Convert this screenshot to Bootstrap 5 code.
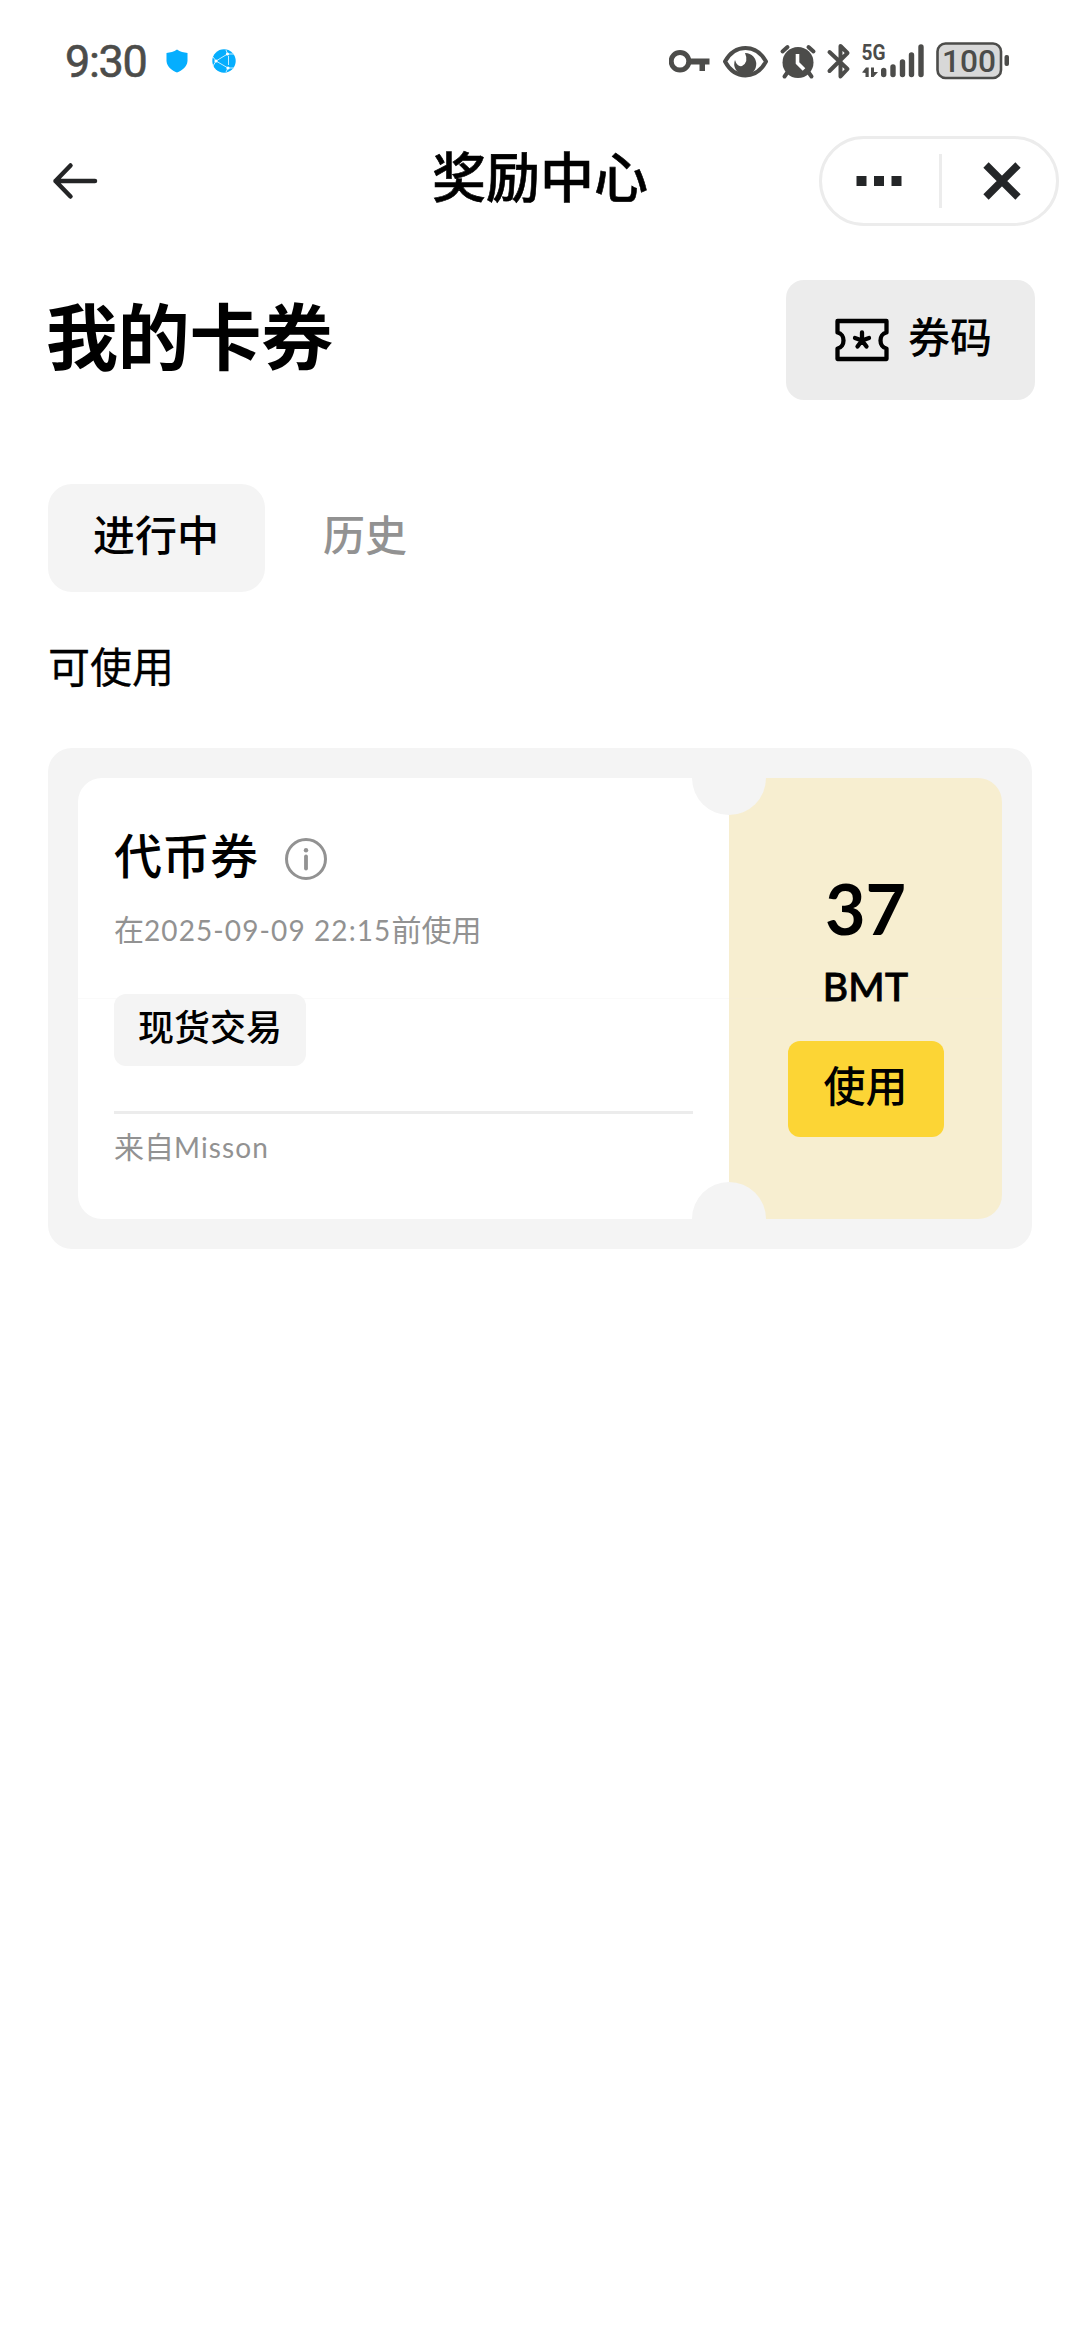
<!DOCTYPE html>
<html lang="zh-CN">
<head>
<meta charset="utf-8">
<meta name="viewport" content="width=device-width, initial-scale=1">
<title>奖励中心</title>
<link href="https://cdn.jsdelivr.net/npm/bootstrap@5.3.0/dist/css/bootstrap.min.css" rel="stylesheet">
<script src="https://cdn.jsdelivr.net/npm/bootstrap@5.3.0/dist/js/bootstrap.bundle.min.js"></script>
<style>
  body { background: #fff; color: #000; font-family: "Noto Sans CJK SC", sans-serif; min-height: 2340px; }
  svg { display: block; flex: none; }
  .medium { font-weight: 500; }
  .status-bar { height: 122px; padding-left: 65px; color: #4c4c4a; }
  .clock { font: 400 45px/50px Roboto, sans-serif; letter-spacing: -1.3px; width: 101px; padding-top: 2px; -webkit-text-stroke: .6px #4c4c4a; }
  .status-icons { padding-right: 70px; }
  .app-bar { height: 118px; padding: 0 21px; }
  .bar-side { flex: 1 1 0; }
  .back-icon { margin-left: 27px; }
  .bar-title { font-size: 54px; line-height: 60px; margin: 0; padding-bottom: 12px; -webkit-text-stroke: .6px #000; }
  .capsule { width: 240px; height: 90px; border: 3px solid #ececec; border-radius: 45px; }
  .capsule-line { width: 3px; height: 54px; background: #ececec; }
  .heading-row { padding: 40px 45px 0 46px; }
  .page-heading { font-size: 72px; line-height: 80px; margin: 0; padding-top: 13px; letter-spacing: -.3px; }
  .code-btn { width: 249px; height: 120px; border-radius: 18px; background: #ececec; border: 0; font-size: 42px; line-height: 48px; padding: 0 0 0 49px; gap: 19px; }
  .code-btn span { padding-bottom: 11px; }
  .tab-row { padding: 84px 48px 0; }
  .tab-pill { height: 108px; border-radius: 24px; font-size: 42px; line-height: 48px; padding: 25px 46px 0 45px; color: #000; background: #f4f4f4; }
  .tab-plain { background: none; color: #929292; padding: 25px 58px 0; }
  .group-label { font-size: 42px; line-height: 48px; margin: 0; padding: 49px 48px 0; -webkit-text-stroke: .3px #000; }
  .coupon-wrap { margin: 59px 48px 0; padding: 30px; border-radius: 24px; background: #f4f4f4; }
  .coupon { height: 441px; border-radius: 24px; overflow: hidden; }
  .coupon-main { width: 651px; padding: 48px 36px 0; background: linear-gradient(#fafafa, #fafafa) 0 220px/100% 1px no-repeat #fff; }
  .coupon-side { background: linear-gradient(#f6edd3, #f6edd3) 0 220px/100% 1px no-repeat #f7eed0; }
  .coupon-name { font-size: 48px; line-height: 54px; margin: 0; }
  .info-icon { margin: 12px 0 0 27px; }
  .notch { position: absolute; left: 614px; width: 74px; height: 74px; border-radius: 50%; background: #f4f4f4; }
  .notch-top { top: -37px; }
  .notch-bottom { bottom: -37px; }
  .note { color: #929292; font-size: 30px; line-height: 36px; height: 36px; }
  .date-note { margin-top: 30px; }
  .from-note { margin-top: 13px; }
  .latin { font-family: Lato, sans-serif; font-size: 28px; letter-spacing: 1.1px; }
  .type-tag { width: 192px; height: 72px; border-radius: 12px; background: #f4f4f4; font-size: 36px; line-height: 42px; padding-top: 10px; margin-top: 48px; }
  .rule { height: 3px; background: #ececec; margin-top: 45px; }
  .amount { font: 700 70px/76px Lato, sans-serif; padding-top: 92px; }
  .unit { font: 500 39px/46px Lato, sans-serif; margin-top: 17px; letter-spacing: .3px; -webkit-text-stroke: .8px #000; }
  .use-btn { width: 156px; height: 96px; border-radius: 12px; background: #fcd535; border: 0; font-size: 42px; line-height: 48px; margin-top: 32px; padding: 0 0 10px; color: #000; }
</style>
</head>
<body>
<header>
  <div class="status-bar d-flex align-items-center">
    <div class="clock">9:30</div>
    <svg width="22" height="24" viewBox="0 0 22 24"><path d="M11 0.500 C14 3 18 3.500 21.500 4 V12 C21 18 16 21.500 11 23.500 C6 21.500 1 18 0.500 12 V4 C4 3.500 8 3 11 .5Z" fill="#05aefe"/></svg>
    <svg class="ms-4" width="24" height="24" viewBox="0 0 24 24"><circle cx="12" cy="12" r="11.700" fill="#05aefe"/><path d="M4 12 15.500 5 M4 12 16 19 M16.500 7V16 M4 12 1 8 M4 12 1 17 M15.500 5H22 M15.500 5 14 1 M16 19H22 M16 19 14 23" stroke="#c4ecff" stroke-width="1" fill="none"/><g fill="#fff"><circle cx="4" cy="12" r="1.600"/><circle cx="15.500" cy="5" r="1.600"/><circle cx="16" cy="19" r="1.600"/></g></svg>
    <div class="status-icons d-flex align-items-center ms-auto">
      <svg width="341" height="40" viewBox="669 41 341 40" fill="#4c4c4a">
        <circle cx="680" cy="61.300" r="8.800" fill="none" stroke="#4c4c4a" stroke-width="5"/>
        <path d="M689 58.500H709.500V64.500H705V71H699.500V64.500H689Z"/>
        <path d="M725 61.500C735 43.500 756 43.500 766 61.500C756 80 735 80 725 61.500Z" fill="none" stroke="#4c4c4a" stroke-width="4" stroke-linejoin="round"/>
        <path d="M745 53A11 11 0 1 1 735 60Q737 67 742 66Q749 62 745 53Z"/>
        <circle cx="798" cy="62.500" r="15.500"/>
        <path d="M787 73 784.500 76.500M809 73 811.500 76.500M782.500 51.500 787.500 47M808.500 47 813.500 51.500" stroke="#4c4c4a" stroke-width="4" stroke-linecap="round"/>
        <path d="M797.500 54V63L804 69.500" fill="none" stroke="#fff" stroke-width="3.600"/>
        <path d="M829.500 52 847.500 69 840.500 76.500V46L847.500 53 829.500 71" fill="none" stroke="#4c4c4a" stroke-width="4" stroke-linejoin="round" stroke-linecap="round"/>
        <text x="861.500" y="60" font-family="Roboto, sans-serif" font-weight="700" font-size="22" textLength="24" lengthAdjust="spacingAndGlyphs">5G</text>
        <path d="M862 72.500 866 67.500H868.700V77H865.500V73ZM871 67.500H874V72H878L873.500 77H871Z"/>
        <path d="M883.700 70.500V74.500M893 67V74.500M902.500 62V74.500M911.500 55V74.500M921 47V74.500" stroke="#4c4c4a" stroke-width="5.400" stroke-linecap="round"/>
        <rect x="937.500" y="43.500" width="63.500" height="34.500" rx="8" fill="#d8d8d8" stroke="#4c4c4a" stroke-width="2.600"/>
        <rect x="1004.500" y="55" width="4.500" height="11" rx="2"/>
        <text x="942" y="72" font-family="Roboto, sans-serif" font-weight="500" font-size="32" textLength="54" lengthAdjust="spacingAndGlyphs">100</text>
      </svg>
    </div>
  </div>
  <nav class="app-bar d-flex align-items-center">
    <div class="bar-side">
      <svg class="back-icon" width="54" height="44" viewBox="48 159 54 44" fill="none" stroke="#242526" stroke-width="4.500" stroke-linecap="round" stroke-linejoin="round"><path d="M95 181H55.500M70.500 165.500 55.500 181 70.500 196.500"/></svg>
    </div>
    <h1 class="bar-title medium text-nowrap">奖励中心</h1>
    <div class="bar-side d-flex justify-content-end">
      <div class="capsule d-flex align-items-center">
        <svg width="117" height="84" viewBox="822 139 117 84" fill="#242628"><path d="M856.500 176h10v10h-10zM874 176h10v10h-10zM891.500 176h10v10h-10z"/></svg>
        <div class="capsule-line"></div>
        <svg width="114" height="84" viewBox="942 139 114 84" stroke="#242628" stroke-width="7.500"><path d="M986 165 1018 197M1018 165 986 197"/></svg>
      </div>
    </div>
  </nav>
</header>
<main>
  <div class="heading-row d-flex justify-content-between align-items-start">
    <h2 class="page-heading fw-bold">我的卡券</h2>
    <button class="code-btn medium d-flex align-items-center" type="button">
      <svg width="54" height="44" viewBox="0 0 54 44" fill="none" stroke="#000" stroke-width="4.300" stroke-linejoin="round"><path d="M2.500 3H51.500V14.500C43.500 16 43.500 29 51.500 30.500V41H2.500V30.500C10.500 29 10.500 16 2.500 14.500Z"/><path d="M27 22.500V14.500M27 22.500 20 20M27 22.500 34 20M27 22.500 22.500 28.500M27 22.500 31.500 28.500" stroke-linecap="round"/></svg>
      <span>券码</span>
    </button>
  </div>
  <div class="tab-row d-flex">
    <div class="tab-pill medium">进行中</div>
    <div class="tab-pill tab-plain medium">历史</div>
  </div>
  <h3 class="group-label fw-normal">可使用</h3>
  <section class="coupon-wrap">
    <div class="coupon d-flex position-relative">
      <div class="coupon-main flex-shrink-0">
        <div class="d-flex align-items-center">
          <h4 class="coupon-name medium">代币券</h4>
          <svg class="info-icon" width="42" height="42" viewBox="0 0 42 42"><circle cx="21" cy="21" r="19.500" fill="none" stroke="#929292" stroke-width="3"/><circle cx="21" cy="12.300" r="2.200" fill="#929292"/><path d="M21 18.500V30.500" stroke="#929292" stroke-width="3.800" stroke-linecap="round"/></svg>
        </div>
        <div class="note date-note">在<span class="latin">2025-09-09 22:15</span>前使用</div>
        <div class="type-tag medium text-center">现货交易</div>
        <div class="rule"></div>
        <div class="note from-note">来自<span class="latin">Misson</span></div>
      </div>
      <div class="coupon-side flex-grow-1 d-flex flex-column align-items-center">
        <div class="amount">37</div>
        <div class="unit">BMT</div>
        <button class="use-btn medium" type="button">使用</button>
      </div>
      <span class="notch notch-top"></span>
      <span class="notch notch-bottom"></span>
    </div>
  </section>
</main>
</body>
</html>
